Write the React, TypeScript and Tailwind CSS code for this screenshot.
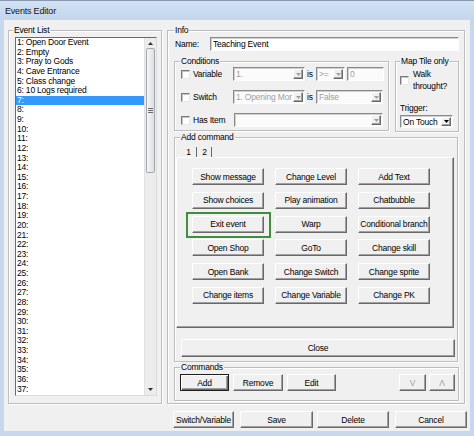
import React from "react";

const raised =
  "bg-[#f0f0f0] border border-t-white border-l-white border-r-[#696969] border-b-[#696969] shadow-[inset_-1px_-1px_0_#a0a0a0]";
const sunken =
  "border border-t-[#8a8a8a] border-l-[#8a8a8a] border-r-white border-b-white shadow-[inset_1px_1px_0_#d0d0d0]";
const group =
  "border border-[#bdbdbd] shadow-[inset_1px_1px_0_#ffffff,1px_1px_0_#ffffff] min-w-0";
const legend = "px-[1px] leading-[10px] bg-[#f0f0f0]";

function Btn({
  children,
  className = "",
  disabled = false,
}: {
  children?: React.ReactNode;
  className?: string;
  disabled?: boolean;
}) {
  return (
    <div
      className={`${raised} flex items-center justify-center whitespace-nowrap ${
        disabled ? "text-[#a0a0a0]" : "text-black"
      } ${className}`}
    >
      {children}
    </div>
  );
}

function Arrow({ color = "#000", up = false }: { color?: string; up?: boolean }) {
  return (
    <svg width="5" height="3" viewBox="0 0 5 3">
      <path d={up ? "M0 3 L2.5 0 L5 3Z" : "M0 0 L5 0 L2.5 3Z"} fill={color} />
    </svg>
  );
}

function Combo({
  text = "",
  disabled = false,
  className = "",
}: {
  text?: string;
  disabled?: boolean;
  className?: string;
}) {
  return (
    <div className={`${sunken} ${disabled ? "bg-[#fbfbfb]" : "bg-white"} flex p-[1px] h-[14px] ${className}`}>
      <div
        className={`flex-1 min-w-0 pl-[1px] overflow-hidden whitespace-nowrap flex items-center ${
          disabled ? "text-[#a0a0a0]" : "text-black"
        }`}
      >
        {text}
      </div>
      <div className={`w-[10px] shrink-0 ${raised} flex items-center justify-center`}>
        <Arrow color={disabled ? "#a0a0a0" : "#000"} />
      </div>
    </div>
  );
}

function Check() {
  return (
    <div className="w-[9px] h-[9px] shrink-0 bg-white border border-t-[#7a7a7a] border-l-[#7a7a7a] border-r-[#e8e8e8] border-b-[#e8e8e8] shadow-[inset_1px_1px_0_#c4c4c4]" />
  );
}

const items = [
  "1: Open Door Event",
  "2: Empty",
  "3: Pray to Gods",
  "4: Cave Entrance",
  "5: Class change",
  "6: 10 Logs required",
  ...Array.from({ length: 31 }, (_, i) => `${i + 7}:`),
];

const commands = [
  "Show message",
  "Change Level",
  "Add Text",
  "Show choices",
  "Play animation",
  "Chatbubble",
  "Exit event",
  "Warp",
  "Conditional branch",
  "Open Shop",
  "GoTo",
  "Change skill",
  "Open Bank",
  "Change Switch",
  "Change sprite",
  "Change items",
  "Change Variable",
  "Change PK",
];

export default function App() {
  return (
    <div className="w-[474px] h-[436px] flex flex-col bg-[#c6d8ed] font-['Liberation_Sans',Arial,sans-serif] text-[8.5px] tracking-[-0.2px] leading-[10px] text-black overflow-hidden">
      {/* title bar */}
      <div className="h-[20px] shrink-0 border-t border-[#8797b0] bg-gradient-to-b from-[#d3e2f4] to-[#c3d6ec] flex items-center pl-[5px] text-[9px] text-[#141414]">
        Events Editor
      </div>

      {/* client area */}
      <div className="mx-[4px] h-[411px] shrink-0 bg-[#f0f0f0] flex flex-col pt-[5px]">
        <div className="flex items-start">
          {/* Event list */}
          <fieldset className={`${group} ml-[4px] w-[154px] pl-[6px] pb-[7px]`}>
            <legend className={`${legend} ml-[-2px]`}>Event List</legend>
            <div className="mt-[2px] w-[142px] h-[359px] flex bg-white border border-t-[#6a6a6a] border-l-[#6a6a6a] border-r-[#dcdcdc] border-b-[#dcdcdc]">
              <div className="w-[128px] flex flex-col">
                {items.map((t, i) => (
                  <div
                    key={i}
                    className={`h-[9.64px] leading-[9.64px] pl-[1px] whitespace-nowrap ${
                      i === 6 ? "bg-[#3399ff] text-white" : ""
                    }`}
                  >
                    {t}
                  </div>
                ))}
              </div>
              <div className="w-[12px] flex flex-col bg-[#ececec] border-l border-[#e2e2e2]">
                <div className="h-[10px] flex items-center justify-center">
                  <Arrow up color="#303030" />
                </div>
                <div className="h-[125px] mx-[1px] rounded-[2px] border border-[#a2a8af] bg-gradient-to-r from-[#f6f6f6] to-[#dedede] flex flex-col items-center justify-center gap-[1px]">
                  <div className="w-[5px] h-[1px] bg-[#6c6c6c]" />
                  <div className="w-[5px] h-[1px] bg-[#6c6c6c]" />
                  <div className="w-[5px] h-[1px] bg-[#6c6c6c]" />
                </div>
                <div className="flex-1" />
                <div className="h-[11px] flex items-center justify-center">
                  <Arrow color="#303030" />
                </div>
              </div>
            </div>
          </fieldset>

          {/* Info */}
          <fieldset className={`${group} ml-[5px] w-[298px] pl-[6px] pb-[2px]`}>
            <legend className={`${legend}`}>Info</legend>
            <div className="flex items-center mt-[2px] h-[14px]">
              <span className="ml-[1px] w-[35px]">Name:</span>
              <div className={`${sunken} bg-white w-[249px] h-[14px] pl-[2px] flex items-center`}>
                Teaching Event
              </div>
            </div>

            <div className="flex items-start mt-[5px] gap-[6px]">
              {/* Conditions */}
              <fieldset className={`${group} w-[215px] pl-[6px] pb-[3px]`}>
                <legend className={`${legend} ml-[-1px]`}>Conditions</legend>
                <div className="flex items-center mt-[1px] h-[14px]">
                  <Check />
                  <span className="ml-[3px] w-[40px]">Variable</span>
                  <Combo className="w-[72px]" text="1." disabled />
                  <span className="w-[11px] pl-[2px]">is</span>
                  <Combo className="w-[29px]" text=">=" disabled />
                  <div className={`${sunken} bg-[#fbfbfb] ml-[2px] w-[37px] h-[14px] pl-[2px] flex items-center text-[#a0a0a0]`}>
                    0
                  </div>
                </div>
                <div className="flex items-center mt-[9px] h-[14px]">
                  <Check />
                  <span className="ml-[3px] w-[40px]">Switch</span>
                  <Combo className="w-[72px]" text="1. Opening Mor" disabled />
                  <span className="w-[11px] pl-[2px]">is</span>
                  <Combo className="w-[67px]" text="False" disabled />
                </div>
                <div className="flex items-center mt-[9px] h-[14px]">
                  <Check />
                  <span className="ml-[3px] w-[40px]">Has Item</span>
                  <Combo className="ml-[1px] w-[149px]" text="" disabled />
                </div>
              </fieldset>

              {/* Map tile */}
              <fieldset className={`${group} w-[64px] pl-[4px] pb-[3px]`}>
                <legend className={`${legend}`}>Map Tile only</legend>
                <div className="flex items-center mt-[2px] h-[24px]">
                  <Check />
                  <div className="ml-[4px] leading-[12px]">
                    Walk
                    <br />
                    throught?
                  </div>
                </div>
                <div className="mt-[11px] leading-[10px]">Trigger:</div>
                <Combo className="mt-[2px] w-[53px] !h-[13px]" text="On Touch" />
              </fieldset>
            </div>

            {/* Add command */}
            <fieldset className={`${group} w-[284px] pl-[1px] pb-[4px]`}>
              <legend className={`${legend} ml-[4px]`}>Add command</legend>
              <div className="flex mt-[5px] h-[10px] pl-[5px]">
                <div className="w-[16px] flex items-center justify-center border-r border-[#696969]">1</div>
                <div className="w-[14px] flex items-center justify-center border-r border-[#696969] ml-[1px]">2</div>
              </div>
              <div className={`${raised} w-[278px] h-[171px] pl-[15px] pt-[10px]`}>
                <div className="grid grid-cols-[72px_72px_72px] gap-x-[11px] gap-y-[6.8px]">
                  {commands.map((c) =>
                    c === "Exit event" ? (
                      <div key={c} className="relative">
                        <Btn className="h-[17px]">{c}</Btn>
                        <div className="absolute -left-[6px] -right-[7px] -top-[4px] -bottom-[5px] border-2 border-[#3e8e3e]" />
                      </div>
                    ) : (
                      <Btn key={c} className="h-[17px]">
                        {c}
                      </Btn>
                    )
                  )}
                </div>
              </div>
              <Btn className="ml-[5px] mt-[11px] w-[274px] h-[18px]">Close</Btn>
            </fieldset>

            {/* Commands */}
            <fieldset className={`${group} w-[285px] pl-[5px] pb-[9px]`}>
              <legend className={`${legend}`}>Commands</legend>
              <div className="flex mt-[2px] h-[17px]">
                <div className="w-[49px] h-[17px] flex items-center justify-center bg-[#f0f0f0] border border-[#1e1e1e] shadow-[inset_1px_1px_0_#fff,inset_-1px_-1px_0_#696969,inset_-2px_-2px_0_#a0a0a0]">
                  Add
                </div>
                <Btn className="ml-[4px] w-[50px] h-[17px]">Remove</Btn>
                <Btn className="ml-[4px] w-[49px] h-[17px]">Edit</Btn>
                <Btn className="ml-[63px] w-[27px] h-[17px]" disabled>
                  V
                </Btn>
                <Btn className="ml-[3px] w-[26px] h-[17px]" disabled>
                  Λ
                </Btn>
              </div>
            </fieldset>
          </fieldset>
        </div>

        {/* bottom buttons */}
        <div className="flex mt-[7px] pl-[169px]">
          <Btn className="w-[61px] h-[17px]">Switch/Variable</Btn>
          <Btn className="ml-[6px] w-[73px] h-[17px]">Save</Btn>
          <Btn className="ml-[4px] w-[72px] h-[17px]">Delete</Btn>
          <Btn className="ml-[6px] w-[72px] h-[17px]">Cancel</Btn>
        </div>
      </div>
      <div className="flex-1" />
    </div>
  );
}
